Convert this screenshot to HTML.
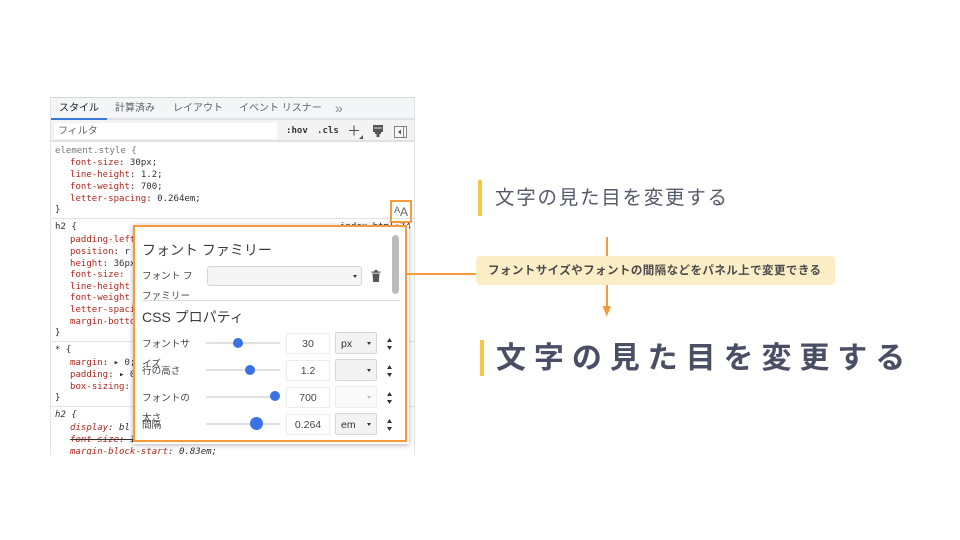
<!DOCTYPE html>
<html lang="ja"><head><meta charset="utf-8"><style>
html,body{margin:0;padding:0;width:960px;height:540px;background:#fff;overflow:hidden}
*{box-sizing:border-box}
.a{position:absolute;white-space:nowrap}
.s{font-family:"Liberation Sans","Noto Sans CJK JP",sans-serif}
.m{font-family:"DejaVu Sans Mono","Liberation Mono",monospace;font-size:9.05px;line-height:12px;color:#303030;margin-top:1px}
.r{color:#b3261e}
.tab{font-size:10px;line-height:14px;color:#5f6368;top:102px}
.lb{font-size:9.6px;line-height:13px;color:#444;margin-top:1px}
.box{background:#fff;border:1px solid #ececec;text-align:center;font:10.5px/20px "Liberation Sans",sans-serif;color:#444;height:21px}
.sel{background:#f3f3f3;border:1px solid #d6d6d6;border-radius:2px;height:22px;font:10.5px/22px "Liberation Sans",sans-serif;color:#333;padding-left:5px}
.tr{position:absolute;width:0;height:0;border-left:2.5px solid transparent;border-right:2.5px solid transparent;border-top:3px solid #333}
.tl{position:absolute;height:2px;background:#e0e0e0;left:206px;width:74px}
.th{position:absolute;border-radius:50%;background:#3a72e4}
.ud{position:absolute;left:387px;width:5px;height:12px}
</style></head><body>
<!-- panel -->
<div class="a" style="left:50px;top:97px;width:365px;height:358px;background:#fff;border-top:1px solid #d4d6d9;border-left:1px solid #e3e3e3;border-right:1px solid #e3e3e3"></div>
<div class="a" style="left:51px;top:98px;width:363px;height:21px;background:#f4f5f6"></div>
<div class="a" style="left:51px;top:118px;width:363px;height:2px;background:#dfe1e4"></div>
<div class="a" style="left:51px;top:118px;width:56px;height:2px;background:#3a78d8"></div>
<div class="a s tab" style="left:59px;color:#222">スタイル</div>
<div class="a s tab" style="left:115px">計算済み</div>
<div class="a s tab" style="left:173px">レイアウト</div>
<div class="a s tab" style="left:239px">イベント リスナー</div>
<div class="a s tab" style="left:335px;top:101px;font-size:14px;color:#888">»</div>
<!-- filter -->
<div class="a" style="left:51px;top:120px;width:363px;height:22px;background:#f3f3f3;border-bottom:2px solid #e0e0e0"></div>
<div class="a" style="left:54px;top:123px;width:223px;height:16px;background:#fff"></div>
<div class="a s" style="left:58px;top:125px;font-size:10px;line-height:14px;color:#666">フィルタ</div>
<div class="a" style="left:286px;top:125px;font:bold 9.05px/13px 'DejaVu Sans Mono',monospace;color:#333">:hov</div>
<div class="a" style="left:317px;top:125px;font:bold 9.05px/13px 'DejaVu Sans Mono',monospace;color:#333">.cls</div>
<svg class="a" style="left:345px;top:122px" width="70" height="20" viewBox="0 0 70 20">
<path d="M9 3.500v10M4 8.500h10" stroke="#555" stroke-width="1.100" fill="none"/>
<path d="M18 13v4h-4z" fill="#555"/>
<path d="M28 3h10v7h-10z" fill="#555"/><path d="M29 6h8" stroke="#ddd" stroke-width="1"/><path d="M30 10h6v2h-1.500v3h-3v-3h-1.500z" fill="#555"/>
<rect x="49.500" y="4.500" width="12" height="11" fill="#f7f7f7" stroke="#666" stroke-width=".8"/><path d="M58.500 4.500v11" stroke="#666" stroke-width=".8"/><path d="M56 7.500v5l-3-2.500z" fill="#555"/>
</svg>
<!-- rules -->
<div class="a m" style="left:55px;top:144px;color:#777">element.style {</div>
<div class="a m" style="left:70px;top:156px"><span class="r">font-size</span>: 30px;</div>
<div class="a m" style="left:70px;top:168px"><span class="r">line-height</span>: 1.2;</div>
<div class="a m" style="left:70px;top:180px"><span class="r">font-weight</span>: 700;</div>
<div class="a m" style="left:70px;top:192px"><span class="r">letter-spacing</span>: 0.264em;</div>
<div class="a m" style="left:55px;top:203px">}</div>
<div class="a" style="left:51px;top:218px;width:363px;height:1px;background:#e2e2e2"></div>
<div class="a m" style="left:55px;top:220px">h2 {</div>
<div class="a m" style="left:340px;top:220px">index.html:74</div>
<div class="a m r" style="left:70px;top:233px">padding-left</div>
<div class="a m" style="left:70px;top:245px"><span class="r">position</span>: r</div>
<div class="a m" style="left:70px;top:257px"><span class="r">height</span>: 36px</div>
<div class="a m r" style="left:70px;top:268px">font-size:</div>
<div class="a m r" style="left:70px;top:280px">line-height</div>
<div class="a m r" style="left:70px;top:291px">font-weight</div>
<div class="a m r" style="left:70px;top:303px">letter-spacing</div>
<div class="a m r" style="left:70px;top:315px">margin-bottom</div>
<div class="a m" style="left:55px;top:326px">}</div>
<div class="a" style="left:51px;top:341px;width:363px;height:1px;background:#e2e2e2"></div>
<div class="a m" style="left:55px;top:343px">* {</div>
<div class="a m" style="left:70px;top:356px"><span class="r">margin</span>: ▸ 0;</div>
<div class="a m" style="left:70px;top:368px"><span class="r">padding</span>: ▸ 0;</div>
<div class="a m" style="left:70px;top:380px"><span class="r">box-sizing</span>: b</div>
<div class="a m" style="left:55px;top:391px">}</div>
<div class="a" style="left:51px;top:406px;width:363px;height:1px;background:#e2e2e2"></div>
<div class="a m" style="left:55px;top:408px;font-style:italic">h2 {</div>
<div class="a m" style="left:70px;top:421px;font-style:italic"><span class="r">display</span>: bl</div>
<div class="a m" style="left:70px;top:433px;font-style:italic;text-decoration:line-through"><span class="r">font-size</span>: 1</div>
<div class="a m" style="left:70px;top:445px;font-style:italic"><span class="r">margin-block-start</span>: 0.83em;</div>
<div class="a" style="left:50px;top:455px;width:366px;height:10px;background:#fff"></div>
<!-- AA button -->
<div class="a s" style="left:394px;top:205px;font-size:9.5px;line-height:12px;color:#666">A</div>
<div class="a s" style="left:400px;top:206px;font-size:12px;line-height:13px;color:#666">A</div>
<div class="a" style="left:390px;top:200px;width:22px;height:23px;border:2px solid #f79a3a"></div>
<!-- popover -->
<div class="a" style="left:133px;top:225px;width:276px;height:219px;background:#fff;box-shadow:0 1px 5px rgba(0,0,0,.3)"></div>
<div class="a s" style="left:142px;top:241px;font-size:14px;line-height:18px;color:#3c3c3c">フォント ファミリー</div>
<div class="a s lb" style="left:142px;top:269px">フォント フ</div>
<div class="a" style="left:207px;top:266px;width:155px;height:20px;background:#f5f5f5;border:1px solid #d6d6d6;border-radius:3px"></div>
<div class="tr" style="left:353px;top:275px"></div>
<svg class="a" style="left:370px;top:269px" width="12" height="14" viewBox="0 0 12 14"><path d="M1.500 2.500h9v1.200h-9zM4.500 1h3v1.500h-3zM2.500 4.500h7l-.6 8.500h-5.800z" fill="#555"/></svg>
<div class="a s lb" style="left:142px;top:289px">ファミリー</div>
<div class="a" style="left:142px;top:300px;width:258px;height:1px;background:#ddd"></div>
<div class="a" style="left:392px;top:235px;width:7px;height:59px;background:#bcbcbc;border-radius:4px"></div>
<div class="a s" style="left:142px;top:308px;font-size:14px;line-height:18px;color:#3c3c3c">CSS プロパティ</div>
<!-- rows -->
<div class="a s lb" style="left:142px;top:337px">フォントサ</div>
<div class="a s lb" style="left:142px;top:357px">イズ</div>
<div class="a s lb" style="left:142px;top:364px">行の高さ</div>
<div class="a s lb" style="left:142px;top:391px">フォントの</div>
<div class="a s lb" style="left:142px;top:411px">太さ</div>
<div class="a s lb" style="left:142px;top:418px">間隔</div>
<div class="tl" style="top:342px"></div><div class="tl" style="top:369px"></div><div class="tl" style="top:396px"></div><div class="tl" style="top:423px"></div>
<div class="th" style="left:233px;top:338px;width:10px;height:10px"></div>
<div class="th" style="left:245px;top:365px;width:10px;height:10px"></div>
<div class="th" style="left:270px;top:391px;width:10px;height:10px"></div>
<div class="th" style="left:250px;top:417px;width:13px;height:13px"></div>
<div class="a box" style="left:286px;top:333px;width:44px">30</div>
<div class="a box" style="left:286px;top:360px;width:44px">1.2</div>
<div class="a box" style="left:286px;top:387px;width:44px">700</div>
<div class="a box" style="left:286px;top:414px;width:44px">0.264</div>
<div class="a sel" style="left:335px;top:332px;width:42px">px</div><div class="tr" style="left:367px;top:342px"></div>
<div class="a sel" style="left:335px;top:359px;width:42px"></div><div class="tr" style="left:367px;top:369px"></div>
<div class="a sel" style="left:335px;top:386px;width:42px;background:#fafafa;border-color:#eee"></div><div class="tr" style="left:367px;top:396px;border-top-color:#bbb"></div>
<div class="a sel" style="left:335px;top:413px;width:42px">em</div><div class="tr" style="left:367px;top:423px"></div>
<svg class="ud" style="top:338px" viewBox="0 0 5 12"><path d="M2.500 0L5 4H0zM2.500 12L0 8h5z" fill="#333"/></svg>
<svg class="ud" style="top:365px" viewBox="0 0 5 12"><path d="M2.500 0L5 4H0zM2.500 12L0 8h5z" fill="#333"/></svg>
<svg class="ud" style="top:392px" viewBox="0 0 5 12"><path d="M2.500 0L5 4H0zM2.500 12L0 8h5z" fill="#333"/></svg>
<svg class="ud" style="top:419px" viewBox="0 0 5 12"><path d="M2.500 0L5 4H0zM2.500 12L0 8h5z" fill="#333"/></svg>
<div class="a" style="left:133px;top:225px;width:274px;height:217px;border:2px solid #f79a3a"></div>
<div class="a" style="left:407px;top:273px;width:70px;height:2px;background:#f79a3a"></div>
<!-- right -->
<div class="a" style="left:478px;top:180px;width:4px;height:36px;background:#f6c644"></div>
<div class="a s" style="left:495px;top:185px;font-size:19.5px;line-height:26px;letter-spacing:1.750px;color:#555a6b">文字の見た目を変更する</div>
<div class="a" style="left:606px;top:237px;width:2px;height:20px;background:#f79a3a"></div>
<div class="a" style="left:606px;top:285px;width:2px;height:22px;background:#f79a3a"></div>
<svg class="a" style="left:602px;top:306px" width="10" height="11"><path d="M0.500 0H9L4.800 10.500z" fill="#f79a3a"/></svg>
<div class="a" style="left:476px;top:256px;width:359px;height:29px;background:#fbeec6;border-radius:4px"></div>
<div class="a s" style="left:488px;top:264px;font-size:11.500px;line-height:15px;letter-spacing:.43px;font-weight:700;color:#4a4a4a">フォントサイズやフォントの間隔などをパネル上で変更できる</div>
<div class="a" style="left:480px;top:340px;width:4px;height:36px;background:#f6c644"></div>
<div class="a s" style="left:496px;top:341px;font-size:30px;line-height:36px;font-weight:700;letter-spacing:7.920px;color:#4b4f66">文字の見た目を変更する</div>
</body></html>
